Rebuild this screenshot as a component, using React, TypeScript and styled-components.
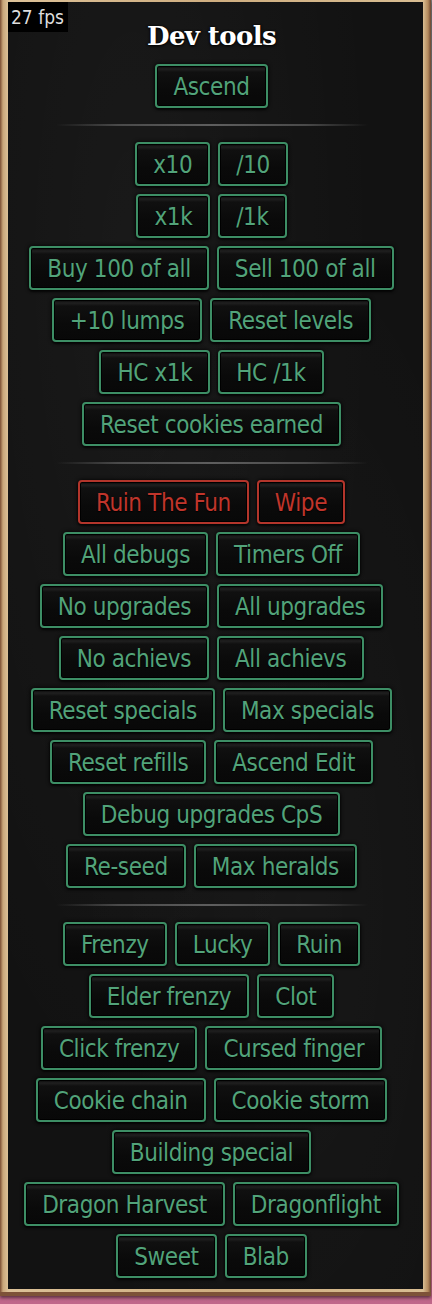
import React from 'react';
import styled, { createGlobalStyle } from 'styled-components';

type Tone = 'green' | 'red';

interface Section {
  rows: { label: string; tone?: Tone }[][];
}

const GlobalStyle = createGlobalStyle`
  html, body {
    margin: 0;
    padding: 0;
    background: #b9607f;
  }
  body {
    width: 432px;
    height: 1304px;
    overflow: hidden;
  }
`;

const Page = styled.div`
  width: 432px;
  height: 1304px;
  background: linear-gradient(#7a7a7a, #9c5a74 60%, #c0678a);
`;

const Wood = styled.div`
  position: relative;
  width: 431px;
  height: 1296px;
  box-sizing: border-box;
  padding: 2px 8px 7px 8px;
  background: linear-gradient(90deg, #7b4e33 0, #c9a67a 3px, #dcc198 8px, #cfae80 50%, #d8bd92 calc(100% - 8px), #b48a5d calc(100% - 3px), #6b4630 100%);
  box-shadow: inset 0 -4px 0 #7d5238, 0 2px 3px rgba(0, 0, 0, 0.5);
`;

const Panel = styled.div`
  height: 100%;
  box-sizing: border-box;
  padding: 12px 8px 0 0;
  background:
    radial-gradient(ellipse at 30% 20%, rgba(255, 255, 255, 0.03), transparent 60%),
    radial-gradient(ellipse at 70% 70%, rgba(255, 255, 255, 0.025), transparent 55%),
    #121212;
  display: flex;
  flex-direction: column;
`;

const Fps = styled.div`
  position: absolute;
  left: 8px;
  top: 2px;
  height: 30px;
  padding: 0 4px 0 3px;
  background: #000;
  color: #ddd;
  font-family: "DejaVu Sans Condensed", "DejaVu Sans", sans-serif;
  font-size: 19px;
  line-height: 30px;
`;

const Title = styled.h1`
  margin: 0 0 8px;
  height: 42px;
  line-height: 44px;
  text-align: center;
  color: #fff;
  font-family: "DejaVu Serif", "Liberation Serif", serif;
  font-weight: bold;
  font-size: 26px;
  letter-spacing: -0.6px;
  text-shadow: 0 1px 3px #000, 0 0 2px #000;
`;

const Group = styled.div`
  display: flex;
  flex-direction: column;
  gap: 8px;
`;

const Row = styled.div`
  display: flex;
  justify-content: center;
  gap: 8px;
`;

const Separator = styled.div`
  width: 312px;
  height: 2px;
  margin: 16px auto;
  background: linear-gradient(90deg, transparent, #4a4a4a 20%, #5e5e5e 50%, #4a4a4a 80%, transparent);
`;

const tones = {
  green: { border: '#3d8e65', text: '#52a37a' },
  red: { border: '#b3352b', text: '#c0352b' },
};

const Btn = styled.button<{ $tone: Tone }>`
  height: 44px;
  box-sizing: border-box;
  padding: 1px 16px 0;
  border: 2px solid ${p => tones[p.$tone].border};
  border-radius: 4px;
  color: ${p => tones[p.$tone].text};
  font-family: "DejaVu Sans Condensed", "DejaVu Sans", sans-serif;
  font-size: 24px;
  letter-spacing: -0.4px;
  line-height: 1;
  white-space: nowrap;
  cursor: pointer;
  background: linear-gradient(#070707 0, #202020 3px, #101010 6px, #0a0a0a 60%, #080808 100%);
  box-shadow: inset 0 0 0 1px #000, 0 0 4px #000, 0 2px 2px rgba(0, 0, 0, 0.6);
  text-shadow: 0 1px 1px #000;
`;

const sections: Section[] = [
  { rows: [[{ label: 'Ascend' }]] },
  {
    rows: [
      [{ label: 'x10' }, { label: '/10' }],
      [{ label: 'x1k' }, { label: '/1k' }],
      [{ label: 'Buy 100 of all' }, { label: 'Sell 100 of all' }],
      [{ label: '+10 lumps' }, { label: 'Reset levels' }],
      [{ label: 'HC x1k' }, { label: 'HC /1k' }],
      [{ label: 'Reset cookies earned' }],
    ],
  },
  {
    rows: [
      [{ label: 'Ruin The Fun', tone: 'red' }, { label: 'Wipe', tone: 'red' }],
      [{ label: 'All debugs' }, { label: 'Timers Off' }],
      [{ label: 'No upgrades' }, { label: 'All upgrades' }],
      [{ label: 'No achievs' }, { label: 'All achievs' }],
      [{ label: 'Reset specials' }, { label: 'Max specials' }],
      [{ label: 'Reset refills' }, { label: 'Ascend Edit' }],
      [{ label: 'Debug upgrades CpS' }],
      [{ label: 'Re-seed' }, { label: 'Max heralds' }],
    ],
  },
  {
    rows: [
      [{ label: 'Frenzy' }, { label: 'Lucky' }, { label: 'Ruin' }],
      [{ label: 'Elder frenzy' }, { label: 'Clot' }],
      [{ label: 'Click frenzy' }, { label: 'Cursed finger' }],
      [{ label: 'Cookie chain' }, { label: 'Cookie storm' }],
      [{ label: 'Building special' }],
      [{ label: 'Dragon Harvest' }, { label: 'Dragonflight' }],
      [{ label: 'Sweet' }, { label: 'Blab' }],
    ],
  },
];

const App: React.FC = () => {
  return (
    <Page>
      <GlobalStyle />
      <Wood>
        <Panel>
          <Title>Dev tools</Title>
          {sections.map((section, i) => (
            <React.Fragment key={i}>
              {i > 0 && <Separator />}
              <Group>
                {section.rows.map((row, j) => (
                  <Row key={j}>
                    {row.map(b => (
                      <Btn key={b.label} $tone={b.tone ?? 'green'}>
                        {b.label}
                      </Btn>
                    ))}
                  </Row>
                ))}
              </Group>
            </React.Fragment>
          ))}
        </Panel>
        <Fps>27 fps</Fps>
      </Wood>
    </Page>
  );
};

export default App;
